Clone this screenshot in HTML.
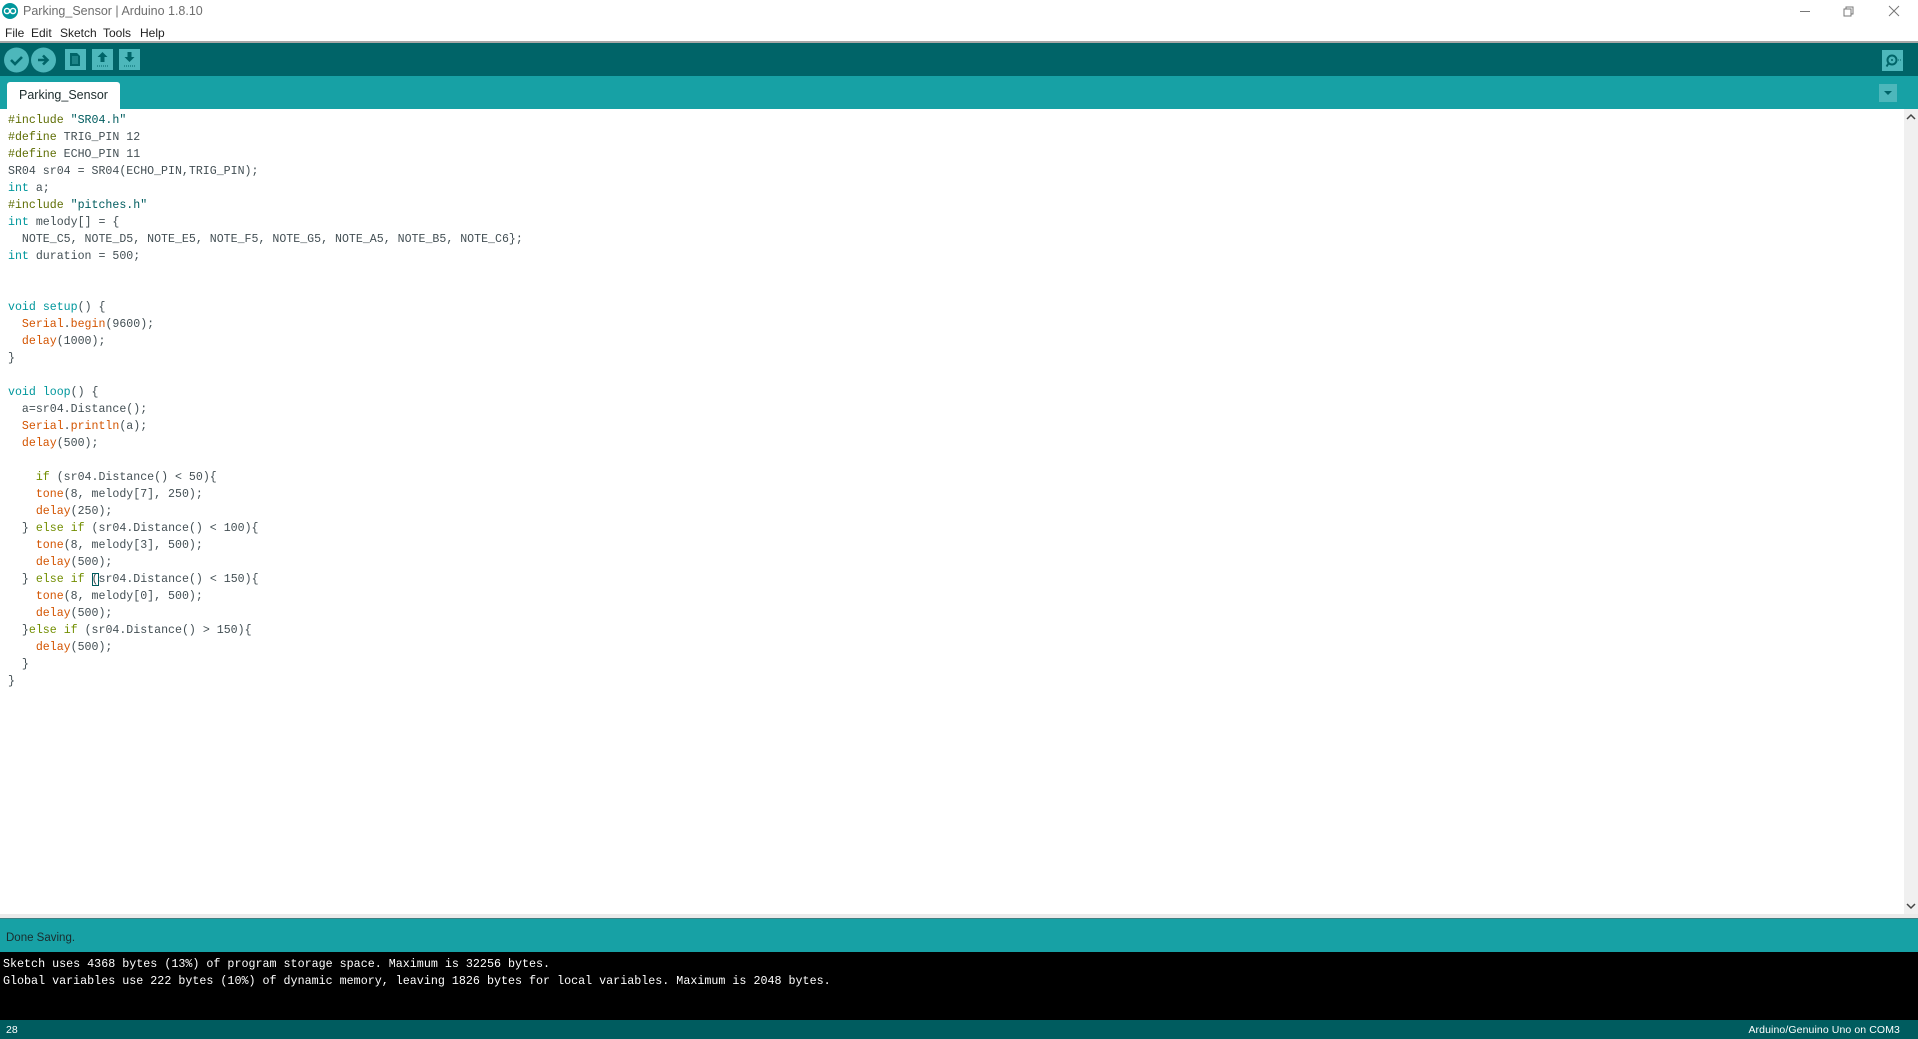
<!DOCTYPE html>
<html><head><meta charset="utf-8">
<style>
*{margin:0;padding:0;box-sizing:border-box}
body{width:1918px;height:1039px;overflow:hidden;background:#fff;font-family:"Liberation Sans",sans-serif;position:relative}
.abs{position:absolute}
#title{left:0;top:0;width:1918px;height:22px;background:#fff}
#title .t{left:23px;top:4px;font-size:12.5px;color:#6e6e6e}
#menu{left:0;top:22px;height:20px;font-size:12px;color:#222}
#menu span{position:absolute;top:4px}
#sep{left:0;top:41px;width:1918px;height:2px;background:#a8a8a8}
#tb{left:0;top:43px;width:1918px;height:33px;background:#006468}
#tabs{left:0;top:76px;width:1918px;height:33px;background:#17a1a5}
#tab{left:7px;top:82px;width:113px;height:27px;background:#fff;border-radius:3px 3px 0 0;font-size:12.5px;color:#1c2b2c;padding:6px 0 0 12px}
#ed{left:0;top:109px;width:1904px;height:805px;background:#fff}
#sb{left:1904px;top:109px;width:14px;height:805px;background:#f0f0f0}
pre{position:absolute;left:8px;top:112px;font-family:"Liberation Mono",monospace;font-size:11.6px;line-height:17px;color:#434f54}
.d{color:#5e6d03}.s{color:#005c5f}.k{color:#00979c}.f{color:#d35400}.c{color:#728e00}
.cur{outline:1.5px solid #005c5f;outline-offset:-1px}
#gap{left:0;top:914px;width:1918px;height:4px;background:#eaeaea}
#status{left:0;top:918px;width:1918px;height:34px;background:#17a1a5;border-top:1px solid #3f7f82}
#status span{position:absolute;left:6px;top:13px;font-size:11.5px;color:#1a2d2e}
#con{left:0;top:952px;width:1918px;height:68px;background:#000}
#con pre{left:3px;top:4px;font-size:11.7px;line-height:17px;color:#fff}
#bot{left:0;top:1020px;width:1918px;height:19px;background:#005c5f;color:#fff;font-size:10.5px}
</style></head><body>
<div id="title" class="abs">
<svg class="abs" style="left:2px;top:3px" width="16" height="16" viewBox="0 0 16 16"><circle cx="8" cy="8" r="8" fill="#00979c"/><circle cx="5" cy="8" r="2.6" fill="none" stroke="#fff" stroke-width="1.4"/><circle cx="11" cy="8" r="2.6" fill="none" stroke="#fff" stroke-width="1.4"/></svg>
<span class="abs t">Parking_Sensor | Arduino 1.8.10</span>
<svg class="abs" style="left:1795px;top:4px" width="120" height="16"><line x1="5" y1="7.5" x2="15" y2="7.5" stroke="#777" /><rect x="49" y="5" width="7" height="7" fill="none" stroke="#777"/><path d="M51 5V3h7v7h-2" fill="none" stroke="#777"/><path d="M94 2l10 10M104 2l-10 10" stroke="#777"/></svg>
</div>
<div id="menu" class="abs"><span style="left:5px">File</span><span style="left:31px">Edit</span><span style="left:60px">Sketch</span><span style="left:103px">Tools</span><span style="left:140px">Help</span></div>
<div id="sep" class="abs"></div>
<div id="tb" class="abs">
<svg class="abs" style="left:0;top:0" width="150" height="33">
<circle cx="16.5" cy="17" r="12.5" fill="#4db7bb"/><path d="M11 17l4 4 7-7" fill="none" stroke="#006468" stroke-width="2.6"/>
<circle cx="43.5" cy="17" r="12.5" fill="#4db7bb"/><path d="M38 17h8M43 12.5l4.5 4.5-4.5 4.5" fill="none" stroke="#006468" stroke-width="2.6"/>
<rect x="65" y="6" width="21" height="21" fill="#4db7bb"/><path d="M70 10h7l3 3v10h-10z" fill="#006468"/><path d="M72 14h6M72 16h6M72 18h6M72 20h6" stroke="#4db7bb" stroke-width="0.8"/>
<rect x="92" y="6" width="21" height="21" fill="#4db7bb"/><path d="M102.5 9l-5 5h3v5h4v-5h3z" fill="#006468"/><path d="M97 23h11" stroke="#006468" stroke-dasharray="1 1"/>
<rect x="119" y="6" width="21" height="21" fill="#4db7bb"/><path d="M127.5 9v5h-3l5 5 5-5h-3v-5z" fill="#006468"/><path d="M124 23h11" stroke="#006468" stroke-dasharray="1 1"/>
</svg>
<svg class="abs" style="left:1882px;top:7px" width="21" height="21"><rect width="21" height="21" fill="#4db7bb"/><circle cx="10" cy="10" r="4.5" fill="none" stroke="#006468" stroke-width="2"/><circle cx="10" cy="10" r="1" fill="#006468"/><path d="M6.5 13.5l-2 3" stroke="#006468" stroke-width="2"/><path d="M16 10h1M18 10h1" stroke="#006468"/></svg>
</div>
<div id="tabs" class="abs">
<svg class="abs" style="left:1879px;top:8px" width="18" height="18"><rect width="18" height="18" fill="#4db7bb"/><path d="M5 7h8l-4 4z" fill="#006468"/></svg>
</div>
<div id="tab" class="abs">Parking_Sensor</div>
<div id="ed" class="abs"></div>
<div id="sb" class="abs"><svg class="abs" style="left:2px;top:4px" width="10" height="8"><path d="M1 6l4-4 4 4" fill="none" stroke="#444" stroke-width="1.5"/></svg><svg class="abs" style="left:2px;top:793px" width="10" height="8"><path d="M1 2l4 4 4-4" fill="none" stroke="#444" stroke-width="1.5"/></svg></div>
<pre><span class="d">#include</span> <span class="s">"SR04.h"</span>
<span class="d">#define</span> TRIG_PIN 12
<span class="d">#define</span> ECHO_PIN 11
SR04 sr04 = SR04(ECHO_PIN,TRIG_PIN);
<span class="k">int</span> a;
<span class="d">#include</span> <span class="s">"pitches.h"</span>
<span class="k">int</span> melody[] = {
  NOTE_C5, NOTE_D5, NOTE_E5, NOTE_F5, NOTE_G5, NOTE_A5, NOTE_B5, NOTE_C6};
<span class="k">int</span> duration = 500;


<span class="k">void</span> <span class="k">setup</span>() {
  <span class="f">Serial</span>.<span class="f">begin</span>(9600);
  <span class="f">delay</span>(1000);
}

<span class="k">void</span> <span class="k">loop</span>() {
  a=sr04.Distance();
  <span class="f">Serial</span>.<span class="f">println</span>(a);
  <span class="f">delay</span>(500);

    <span class="c">if</span> (sr04.Distance() &lt; 50){
    <span class="f">tone</span>(8, melody[7], 250);
    <span class="f">delay</span>(250);
  } <span class="c">else</span> <span class="c">if</span> (sr04.Distance() &lt; 100){
    <span class="f">tone</span>(8, melody[3], 500);
    <span class="f">delay</span>(500);
  } <span class="c">else</span> <span class="c">if</span> <span class="cur">(</span>sr04.Distance() &lt; 150){
    <span class="f">tone</span>(8, melody[0], 500);
    <span class="f">delay</span>(500);
  }<span class="c">else</span> <span class="c">if</span> (sr04.Distance() &gt; 150){
    <span class="f">delay</span>(500);
  }
}</pre>
<div id="gap" class="abs"></div>
<div id="status" class="abs"><span>Done Saving.</span></div>
<div id="con" class="abs"><pre>Sketch uses 4368 bytes (13%) of program storage space. Maximum is 32256 bytes.
Global variables use 222 bytes (10%) of dynamic memory, leaving 1826 bytes for local variables. Maximum is 2048 bytes.</pre></div>
<div id="bot" class="abs"><span class="abs" style="left:6px;top:4px">28</span><span class="abs" style="right:18px;top:4px;letter-spacing:0.1px">Arduino/Genuino Uno on COM3</span></div>
</body></html>
